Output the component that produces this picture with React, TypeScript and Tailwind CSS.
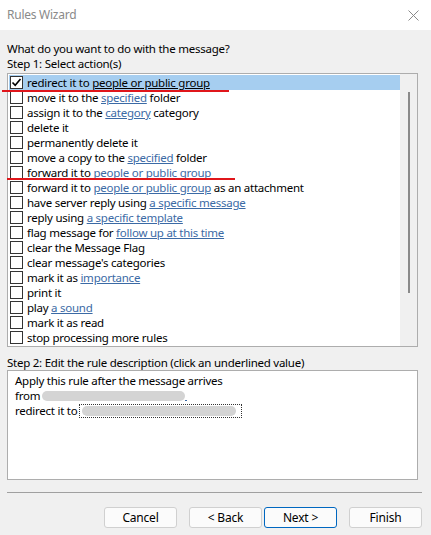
const actions: { pre: string; link?: string; post?: string }[] = [
  { pre: "redirect it to ", link: "people or public group" },
  { pre: "move it to the ", link: "specified", post: " folder" },
  { pre: "assign it to the ", link: "category", post: " category" },
  { pre: "delete it" },
  { pre: "permanently delete it" },
  { pre: "move a copy to the ", link: "specified", post: " folder" },
  { pre: "forward it to ", link: "people or public group" },
  { pre: "forward it to ", link: "people or public group", post: " as an attachment" },
  { pre: "have server reply using ", link: "a specific message" },
  { pre: "reply using ", link: "a specific template" },
  { pre: "flag message for ", link: "follow up at this time" },
  { pre: "clear the Message Flag" },
  { pre: "clear message's categories" },
  { pre: "mark it as ", link: "importance" },
  { pre: "print it" },
  { pre: "play ", link: "a sound" },
  { pre: "mark it as read" },
  { pre: "stop processing more rules" },
];

const Checkbox = ({ checked }: { checked?: boolean }) => (
  <span className="w-[13px] h-[13px] border border-[#333] bg-white flex items-center justify-center shrink-0">
    {checked && (
      <svg width="11" height="11" viewBox="0 0 11 11">
        <path d="M1.5 5.5 L4.2 8.3 L9.5 2" fill="none" stroke="#000" strokeWidth="1.6" />
      </svg>
    )}
  </span>
);

const Button = ({ label, primary }: { label: string; primary?: boolean }) => (
  <button
    className={
      primary
        ? "w-[73px] h-[21px] rounded-[3px] border border-[#0067c0] bg-[#fbfbfb] text-[12px] leading-none tracking-[-0.2px]"
        : "w-[73px] h-[21px] rounded-[3px] border border-[#d0d0d0] bg-[#fbfbfb] text-[12px] leading-none tracking-[-0.2px]"
    }
  >
    {label}
  </button>
);

export default function App() {
  return (
    <div className="w-[431px] h-[535px] bg-[#f0f0f0] text-[#000] text-[11.5px] tracking-[-0.25px] relative overflow-hidden" style={{ fontFamily: '"Noto Sans", "Open Sans", sans-serif' }}>
      <div className="h-[30px] bg-white flex items-center justify-between pl-[7px] pr-[12px]">
        <span className="text-[#8a8a8a] text-[12px]">Rules Wizard</span>
        <svg width="11" height="11" viewBox="0 0 11 11">
          <path d="M0.5 0.5 L10.5 10.5 M10.5 0.5 L0.5 10.5" stroke="#8a8a8a" strokeWidth="1" />
        </svg>
      </div>

      <div className="px-[7px] pt-[11px]">
        <div className="leading-[15px]">What do you want to do with the message?</div>
        <div className="leading-[15px]">Step 1: Select action(s)</div>

        <div className="mt-[2px] w-[411px] h-[274px] border border-[#adadad] bg-white flex">
          <div className="flex-1 pt-[1px] pl-px">
            {actions.map((a, i) => (
              <div
                key={i}
                className={
                  i === 0
                    ? "h-[15px] flex items-center gap-[4px] pl-px bg-[#a6cef0] whitespace-nowrap"
                    : "h-[15px] flex items-center gap-[4px] pl-px whitespace-nowrap"
                }
              >
                <Checkbox checked={i === 0} />
                <span className="leading-[15px]">
                  {a.pre}
                  {a.link && (
                    <span className={i === 0 ? "underline text-black" : "underline text-[#3b6aa5]"}>{a.link}</span>
                  )}
                  {a.post}
                </span>
              </div>
            ))}
          </div>
          <div className="w-[17px] bg-[#f0f0f0] flex justify-center pt-[18px]">
            <div className="w-[2px] h-[201px] bg-[#8a8a8a]" />
          </div>
        </div>

        <div className="leading-[15px] mt-[8px]">Step 2: Edit the rule description (click an underlined value)</div>
        <div className="w-[411px] h-[110px] border border-[#adadad] bg-white pl-[7px] pt-[2px] leading-[15px]">
          <div>Apply this rule after the message arrives</div>
          <div className="flex items-center">
            <span>from</span>
            <span className="ml-[2px] w-[143px] h-[10px] rounded-full bg-[#d4d4d4]" />
            <span className="w-[2px] h-[8px] border-b border-[#3b6aa5] self-end mb-[2px]" />
          </div>
          <div className="flex items-center">
            <span>redirect it to</span>
            <span className="ml-[2px] h-[14px] w-[163px] border border-dotted border-[#333] flex items-center px-[2px]">
              <span className="w-[154px] h-[10px] rounded-full bg-[#d4d4d4]" />
            </span>
          </div>
        </div>

        <div className="mt-[12px] w-[415px] h-px bg-[#a0a0a0]" />

        <div className="mt-[14px] flex justify-end pr-[2px]">
          <Button label="Cancel" />
          <div className="w-[12px]" />
          <Button label="< Back" />
          <div className="w-[2px]" />
          <Button label="Next >" primary />
          <div className="w-[12px]" />
          <Button label="Finish" />
        </div>
      </div>

      <div className="absolute left-[2px] top-[90px] w-[227px] h-[2px] bg-[#e0161b]" />
      <div className="absolute left-[7px] top-[178px] w-[228px] h-[2px] bg-[#e0161b]" />
    </div>
  );
}
